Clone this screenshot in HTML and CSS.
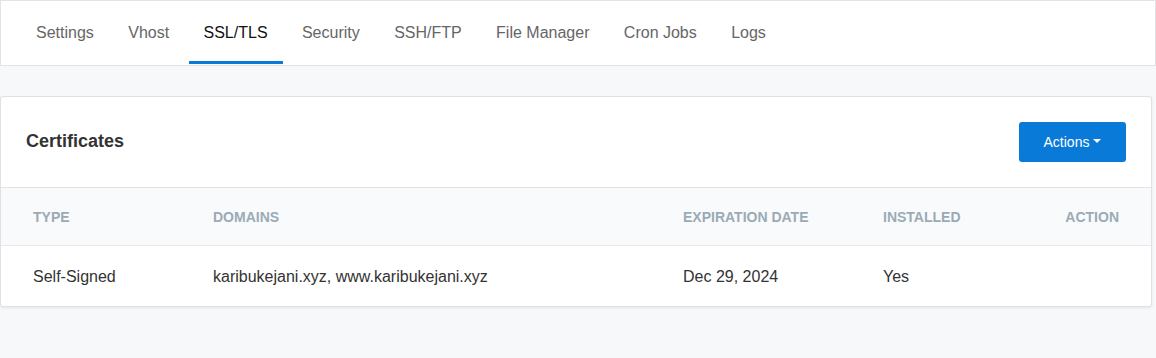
FILE: index.html
```html
<!DOCTYPE html>
<html>
<head>
<meta charset="utf-8">
<link rel="stylesheet" href="styles.css">
</head>
<body>
<nav class="tabs">
  <a class="tab">Settings</a>
  <a class="tab">Vhost</a>
  <a class="tab active">SSL/TLS</a>
  <a class="tab">Security</a>
  <a class="tab">SSH/FTP</a>
  <a class="tab">File Manager</a>
  <a class="tab">Cron Jobs</a>
  <a class="tab">Logs</a>
</nav>
<section class="card">
  <header class="card-header">
    <h2 class="card-title">Certificates</h2>
    <button class="btn">Actions<span class="caret"></span></button>
  </header>
  <table class="table">
    <colgroup>
      <col class="c1"><col class="c2"><col class="c3"><col class="c4"><col>
    </colgroup>
    <thead>
      <tr><th>Type</th><th>Domains</th><th>Expiration Date</th><th>Installed</th><th class="right">Action</th></tr>
    </thead>
    <tbody>
      <tr><td>Self-Signed</td><td>karibukejani.xyz, www.karibukejani.xyz</td><td>Dec 29, 2024</td><td>Yes</td><td></td></tr>
    </tbody>
  </table>
</section>
</body>
</html>
```
FILE: styles.css
```css
* { box-sizing: border-box; }
html, body { margin: 0; padding: 0; }
body {
  background: #f7f8fa;
  font-family: "Liberation Sans", Arial, sans-serif;
  color: #333;
  width: 1156px;
  height: 358px;
}
.tabs {
  display: flex;
  gap: 4.4px;
  height: 66px;
  padding: 0 20px;
  background: #fff;
  border: 1px solid #e1e3e6;
}
.tab {
  display: flex;
  align-items: center;
  padding: 3px 15px 0;
  height: 63px;
  font-size: 16px;
  color: #666;
  border-bottom: 3px solid transparent;
}
.tab.active {
  color: #111;
  border-bottom-color: #0a7ad8;
}
.card {
  margin-top: 30px;
  width: 1152px;
  background: #fff;
  border: 1px solid #dfe1e4;
  border-radius: 3px;
  box-shadow: 0 1px 3px rgba(0,0,0,0.08);
}
.card-header {
  display: flex;
  align-items: center;
  justify-content: space-between;
  height: 91px;
  padding: 0 25px 2px 25px;
  border-bottom: 1px solid #e1e3e6;
}
.card-title {
  margin: 0;
  font-size: 18px;
  font-weight: bold;
  color: #333;
}
.btn {
  display: flex;
  align-items: center;
  height: 40px;
  width: 107px;
  justify-content: center;
  padding: 0;
  margin-top: 2px;
  border: none;
  border-radius: 3px;
  background: #0a7ad8;
  color: #fff;
  font-family: inherit;
  font-size: 14px;
}
.caret {
  display: inline-block;
  margin-left: 4px;
  margin-top: -2px;
  border-left: 4px solid transparent;
  border-right: 4px solid transparent;
  border-top: 4px solid #fff;
}
.table {
  width: 100%;
  border-collapse: collapse;
  table-layout: fixed;
}
.c1 { width: 180px; }
.c2 { width: 470px; }
.c3 { width: 200px; }
.c4 { width: 200px; }
.table th {
  background: #f9fafb;
  height: 57px;
  padding: 2px 0 0 32px;
  text-align: left;
  font-size: 14px;
  font-weight: bold;
  text-transform: uppercase;
  color: #9aabb6;
  border-bottom: 1px solid #e6e8eb;
}
.table th.right { text-align: right; padding: 2px 32px 0 0; }
.table td {
  height: 61px;
  padding: 3px 0 0 32px;
  font-size: 16px;
  color: #333;
}
```
